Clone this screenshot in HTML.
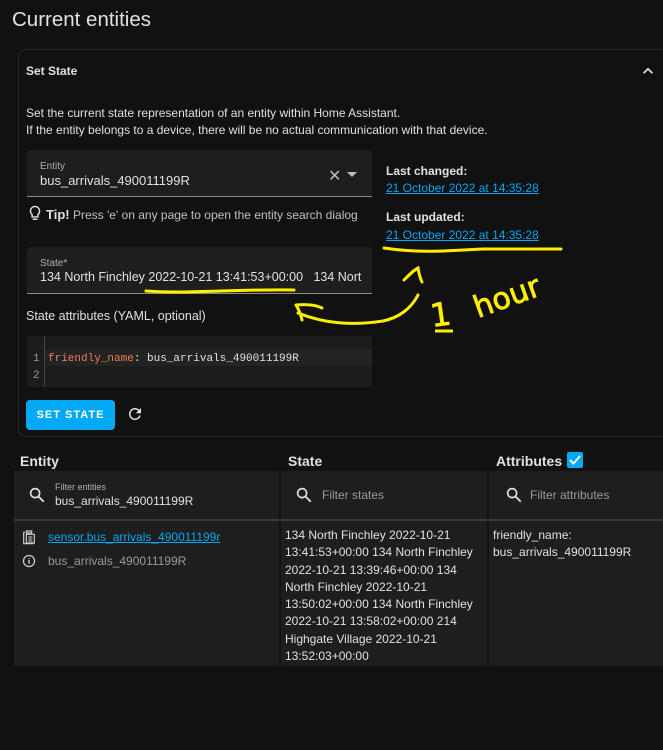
<!DOCTYPE html>
<html><head><meta charset="utf-8"><style>
*{box-sizing:border-box;margin:0;padding:0}
body{width:663px;height:750px;background:#111111;color:#e1e1e1;font-family:"Liberation Sans",sans-serif;position:relative;overflow:hidden}
.a{position:absolute;white-space:nowrap}
.field{position:absolute;background:#1e1e1e;border-bottom:1px solid #8a8a8a;border-radius:4px 4px 0 0}
.lbl{font-size:10px;color:#b0b0b0}
.lnk{color:#03a9f4;text-decoration:underline;font-size:12px}
.b{font-weight:bold}
</style></head><body>
<div class="a" style="left:12px;top:8px;font-size:20.5px;color:#e1e1e1">Current entities</div>

<div class="a" style="left:18px;top:49px;width:660px;height:388px;border:1px solid #2a2a2a;border-radius:8px;background:#111"></div>
<div class="a b" style="left:26px;top:64px;font-size:12px">Set State</div>
<svg class="a" style="left:638px;top:61px" width="20" height="20" viewBox="0 0 24 24"><path d="M7.4 15.4L12 10.8l4.6 4.6L18 14l-6-6-6 6z" fill="#e1e1e1"/></svg>
<div class="a" style="left:26px;top:105px;font-size:12px;line-height:17px">Set the current state representation of an entity within Home Assistant.<br>If the entity belongs to a device, there will be no actual communication with that device.</div>

<div class="field" style="left:27px;top:150px;width:345px;height:47px"></div>
<div class="a lbl" style="left:40px;top:161px">Entity</div>
<div class="a" style="left:40px;top:173px;font-size:13px">bus_arrivals_490011199R</div>
<div class="a" style="left:328px;top:166px;font-size:16px;color:#bbb">✕</div>
<svg class="a" style="left:347px;top:172px" width="10" height="6"><path d="M0 0h10L5 5z" fill="#bbb"/></svg>
<svg class="a" style="left:28px;top:205px" width="14" height="18" viewBox="0 0 24 30"><path d="M12 2a8 8 0 0 0-5 14v4h10v-4a8 8 0 0 0-5-14zM8 24h8" stroke="#e1e1e1" stroke-width="2.5" fill="none"/></svg>
<div class="a" style="left:46px;top:207px;font-size:12px"><span class="b" style="font-size:13px">Tip!</span> <span style="color:#c0c0c0">Press 'e' on any page to open the entity search dialog</span></div>

<div class="field" style="left:27px;top:247px;width:345px;height:47px"></div>
<div class="a lbl" style="left:40px;top:258px">State*</div>
<div class="a" style="left:40px;top:270px;font-size:12.5px">134 North Finchley 2022-10-21 13:41:53+00:00&nbsp;&nbsp; 134 Nort</div>

<div class="a" style="left:26px;top:309px;font-size:12.5px">State attributes (YAML, optional)</div>
<div class="a" style="left:27px;top:336px;width:345px;height:51px;background:#1c1c1c"></div>
<div class="a" style="left:44px;top:336px;width:1px;height:51px;background:#444"></div>
<div class="a" style="left:45px;top:349px;width:327px;height:17px;background:#232323"></div>
<div class="a" style="left:33px;top:351px;font-family:'Liberation Mono',monospace;font-size:11px;line-height:17px;color:#999">1<br>2</div>
<div class="a" style="left:48px;top:351px;font-family:'Liberation Mono',monospace;font-size:11px;line-height:17px"><span style="color:#e7805a">friendly_name</span>: bus_arrivals_490011199R</div>
<div class="a" style="left:26px;top:400px;width:89px;height:30px;background:#03a9f4;border-radius:4px;color:#fff;font-size:11px;font-weight:bold;letter-spacing:1px;text-align:center;line-height:30px">SET STATE</div>
<svg class="a" style="left:126px;top:405px" width="18" height="18" viewBox="0 0 24 24"><path d="M17.65 6.35A8 8 0 1 0 19.73 14h-2.08A6 6 0 1 1 12 6c1.66 0 3.14.69 4.22 1.78L13 11h7V4l-2.35 2.35z" fill="#e1e1e1"/></svg>

<div class="a b" style="left:386px;top:164px;font-size:12px">Last changed:</div>
<div class="a lnk" style="left:386px;top:181px">21 October 2022 at 14:35:28</div>
<div class="a b" style="left:386px;top:210px;font-size:12px">Last updated:</div>
<div class="a lnk" style="left:386px;top:228px">21 October 2022 at 14:35:28</div>

<div class="a b" style="left:20px;top:453px;font-size:14px">Entity</div>
<div class="a b" style="left:288px;top:453px;font-size:14px">State</div>
<div class="a b" style="left:496px;top:453px;font-size:14px">Attributes</div>
<div class="a" style="left:567px;top:452px;width:16px;height:16px;background:#03a9f4;border-radius:2px"></div>
<svg class="a" style="left:567px;top:452px" width="16" height="16"><path d="M3 8l3.5 3.5L13 4" stroke="#fff" stroke-width="2" fill="none"/></svg>

<div class="a" style="left:14px;top:471px;width:265px;height:48px;background:#1e1e1e"></div>
<div class="a" style="left:281px;top:471px;width:206px;height:48px;background:#1e1e1e"></div>
<div class="a" style="left:489px;top:471px;width:180px;height:48px;background:#1e1e1e"></div>
<div class="a" style="left:14px;top:519px;width:660px;height:2px;background:#3a3a3a"></div>
<div class="a" style="left:14px;top:521px;width:265px;height:145px;background:#1e1e1e"></div>
<div class="a" style="left:281px;top:521px;width:206px;height:145px;background:#1e1e1e"></div>
<div class="a" style="left:489px;top:521px;width:180px;height:145px;background:#1e1e1e"></div>
<svg class="a" style="left:28px;top:486px" width="18" height="18" viewBox="0 0 24 24"><circle cx="9.5" cy="9.5" r="6" stroke="#e1e1e1" stroke-width="2.2" fill="none"/><path d="M14 14l7 7" stroke="#e1e1e1" stroke-width="2.5"/></svg>
<svg class="a" style="left:295px;top:486px" width="18" height="18" viewBox="0 0 24 24"><circle cx="9.5" cy="9.5" r="6" stroke="#e1e1e1" stroke-width="2.2" fill="none"/><path d="M14 14l7 7" stroke="#e1e1e1" stroke-width="2.5"/></svg>
<svg class="a" style="left:505px;top:486px" width="18" height="18" viewBox="0 0 24 24"><circle cx="9.5" cy="9.5" r="6" stroke="#e1e1e1" stroke-width="2.2" fill="none"/><path d="M14 14l7 7" stroke="#e1e1e1" stroke-width="2.5"/></svg>
<div class="a lbl" style="left:55px;top:482px;font-size:9px">Filter entities</div>
<div class="a" style="left:55px;top:494px;font-size:12px">bus_arrivals_490011199R</div>
<div class="a" style="left:322px;top:488px;font-size:12px;color:#9a9a9a">Filter states</div>
<div class="a" style="left:530px;top:488px;font-size:12px;color:#9a9a9a">Filter attributes</div>

<svg class="a" style="left:22px;top:529px" width="14" height="16" viewBox="0 0 20 24"><path d="M6 3h8v3H6zM4 5H2v17h14v-2M6 8h12v13H6z" stroke="#ccc" stroke-width="1.8" fill="none"/><path d="M9 12h6M9 15h6M9 18h6" stroke="#ccc" stroke-width="1.5"/></svg>
<div class="a lnk" style="left:48px;top:530px;font-size:12px">sensor.bus_arrivals_490011199r</div>
<svg class="a" style="left:22px;top:554px" width="14" height="14" viewBox="0 0 24 24"><circle cx="12" cy="12" r="9.5" stroke="#ccc" stroke-width="2.2" fill="none"/><path d="M12 10v7M12 7v1.5" stroke="#ccc" stroke-width="2.4"/></svg>
<div class="a" style="left:48px;top:554px;font-size:12px;color:#9a9a9a">bus_arrivals_490011199R</div>
<div class="a" style="left:285px;top:527px;font-size:12px;line-height:17.3px;color:#e1e1e1">134 North Finchley 2022-10-21<br>13:41:53+00:00 134 North Finchley<br>2022-10-21 13:39:46+00:00 134<br>North Finchley 2022-10-21<br>13:50:02+00:00 134 North Finchley<br>2022-10-21 13:58:02+00:00 214<br>Highgate Village 2022-10-21<br>13:52:03+00:00</div>
<div class="a" style="left:493px;top:527px;font-size:12px;line-height:17.3px">friendly_name:<br>bus_arrivals_490011199R</div>

<svg class="a" style="left:0;top:0" width="663" height="750">
<g stroke="#ffee00" stroke-width="3" fill="none" stroke-linecap="round">
<path d="M146 291c40 3 90-2 148-1"/>
<path d="M384 248c40 6 70 2 100 1c30 0 55 0 77 0"/>
<path d="M298 313c30 12 60 12 85 8c15-3 28-12 35-26M404 280c6-6 10-10 14-12c1 6 2 10 4 14"/>
<path d="M322 308c-6-3-14-4-26-3M296 305c3 5 5 10 6 15"/>
</g>
<g fill="#ffee00" stroke="#ffee00" stroke-width="0.8" font-family="'DejaVu Sans',sans-serif">
<text x="432" y="327" font-size="32" transform="rotate(-8 432 327)">1</text>
<text x="478" y="318" font-size="30" transform="rotate(-20 478 318)">hour</text>
</g>
<path d="M435 331h18" stroke="#ffee00" stroke-width="3"/>
</svg>
</body></html>
